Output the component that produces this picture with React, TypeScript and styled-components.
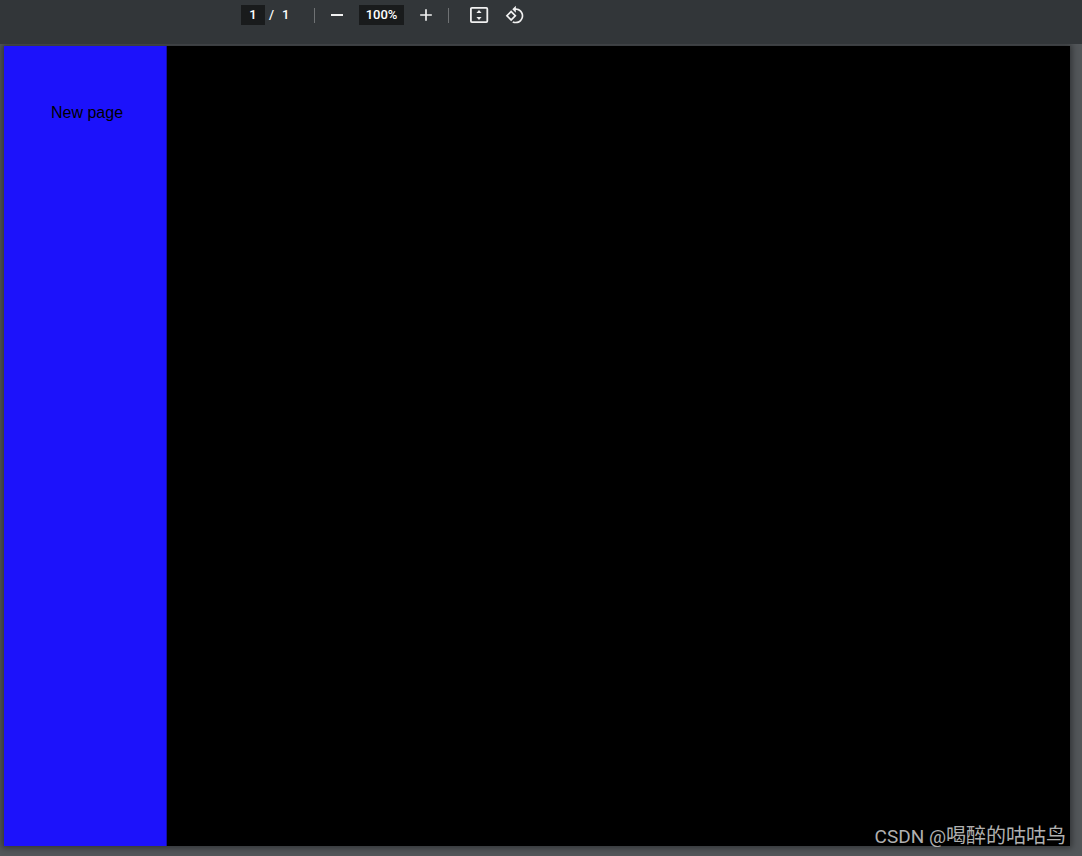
import React from "react";
import styled, { createGlobalStyle } from "styled-components";

const GlobalStyle = createGlobalStyle`
  * { box-sizing: border-box; }
  html, body, #root { height: 100%; }
  body { margin: 0; background: #525659; }
`;

const Viewer = styled.div`
  display: flex;
  flex-direction: column;
  min-height: 100%;
  position: relative;
`;

const Toolbar = styled.header`
  position: relative;
  z-index: 1;
  display: flex;
  align-items: flex-start;
  height: 44px;
  padding: 5px 0 0 241px;
  background: #323639;
  color: #fff;
  font: 500 13px/20px Roboto, sans-serif;
`;

const Field = styled.input<{ $width: number }>`
  width: ${(p) => p.$width}px;
  height: 20px;
  padding: 0;
  border: 0;
  border-radius: 0;
  background: #191b1c;
  color: #fff;
  font: inherit;
  text-align: center;
  outline: none;
`;

const PageSelector = styled.div`
  display: flex;
  width: 73px;
`;

const Slash = styled.span`
  margin: 0 8px 0 4px;
`;

const Divider = styled.span`
  width: 1px;
  height: 15px;
  margin-top: 3px;
  background: #6f7274;
`;

const ZoomControls = styled.div`
  display: flex;
  gap: 12px;
  margin: 0 12px;
`;

const FitControls = styled.div`
  display: flex;
  gap: 16px;
  margin-left: 20px;
`;

const IconButton = styled.button`
  display: flex;
  width: 20px;
  height: 20px;
  padding: 0;
  border: 0;
  background: none;
  color: #f1f1f1;
`;

const Canvas = styled.main`
  display: flex;
  flex: 1;
  padding: 2px 12px 10px 4px;
`;

const Sheet = styled.article`
  display: flex;
  flex: 1;
  background: #000;
  box-shadow: 0 0 6px 2px rgba(0, 0, 0, 0.4);
`;

const Panel = styled.section`
  width: 163px;
  padding: 57px 0 0 47px;
  background: #1c12fb;
  border-right: 1px solid #150da8;
`;

const PanelText = styled.p`
  margin: 0;
  color: #000;
  font: 16px/20px "Liberation Sans", Arial, sans-serif;
`;

const Watermark = styled.span`
  position: absolute;
  right: 16px;
  bottom: 5px;
  color: #b0b0b0;
  font: 20px/28px "Noto Sans CJK SC", sans-serif;
  white-space: nowrap;
`;

const Latin = styled.span`
  font-family: Roboto, sans-serif;
  font-size: 19px;
`;

export default function App() {
  return (
    <Viewer>
      <GlobalStyle />
      <Toolbar>
        <PageSelector>
          <Field $width={24} aria-label="Page number" defaultValue="1" />
          <Slash>/</Slash>
          <span>1</span>
        </PageSelector>
        <Divider />
        <ZoomControls>
          <IconButton aria-label="Zoom out">
            <svg width="20" height="20" fill="currentColor">
              <path d="M4 9h12v2H4z" />
            </svg>
          </IconButton>
          <Field $width={45} aria-label="Zoom level" defaultValue="100%" />
          <IconButton aria-label="Zoom in">
            <svg width="20" height="20" fill="currentColor" viewBox="0 0 24 24">
              <path d="M19 13h-6v6h-2v-6H5v-2h6V5h2v6h6v2z" />
            </svg>
          </IconButton>
        </ZoomControls>
        <Divider />
        <FitControls>
          <IconButton aria-label="Fit to page">
            <svg width="20" height="20" fill="none">
              <rect x="1.9" y="2.9" width="16.4" height="14.2" rx="1" stroke="currentColor" strokeWidth="1.8" />
              <path d="M10 5l2.6 3H7.4zM10 15l2.6-3H7.4z" fill="currentColor" />
            </svg>
          </IconButton>
          <IconButton aria-label="Rotate counterclockwise">
            <svg width="20" height="20" fill="currentColor" viewBox="0 0 24 24">
              <path d="M7.34 6.41L.86 12.9l6.49 6.48 6.49-6.48-6.5-6.49zM3.69 12.9l3.66-3.66L11 12.9l-3.66 3.66-3.65-3.66zm15.67-6.26C17.61 4.88 15.3 4 13 4V.76L8.76 5 13 9.24V6c1.79 0 3.58.68 4.95 2.05 2.73 2.73 2.73 7.17 0 9.9C16.58 19.32 14.79 20 13 20c-.97 0-1.94-.21-2.84-.61l-1.49 1.49C10.02 21.62 11.51 22 13 22c2.3 0 4.61-.88 6.36-2.64 3.52-3.51 3.52-9.21 0-12.72z" />
            </svg>
          </IconButton>
        </FitControls>
      </Toolbar>
      <Canvas>
        <Sheet>
          <Panel>
            <PanelText>New page</PanelText>
          </Panel>
        </Sheet>
      </Canvas>
      <Watermark>
        <Latin>CSDN @</Latin>喝醉的咕咕鸟
      </Watermark>
    </Viewer>
  );
}
